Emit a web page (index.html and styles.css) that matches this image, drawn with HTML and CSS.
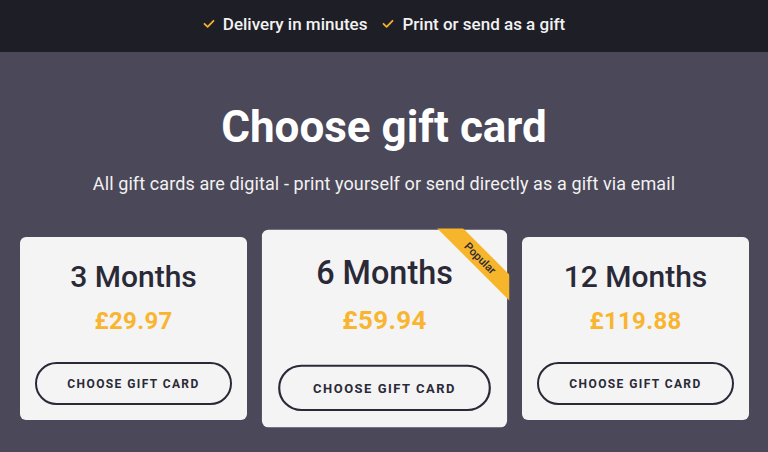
FILE: index.html
```html
<!DOCTYPE html>
<html lang="en">
<head>
<meta charset="utf-8">
<title>Choose gift card</title>
<link rel="stylesheet" href="styles.css">
</head>
<body>
<header class="topbar">
  <div class="perk"><svg class="check" viewBox="0 0 12 10" width="12" height="10"><path d="M1.5 4.8 L4.6 7.8 L10.5 1.8" fill="none" stroke="#f4b12e" stroke-width="1.8" stroke-linecap="round" stroke-linejoin="round"/></svg><span>Delivery in minutes</span></div>
  <div class="perk"><svg class="check" viewBox="0 0 12 10" width="12" height="10"><path d="M1.5 4.8 L4.6 7.8 L10.5 1.8" fill="none" stroke="#f4b12e" stroke-width="1.8" stroke-linecap="round" stroke-linejoin="round"/></svg><span>Print or send as a gift</span></div>
</header>
<main class="main">
  <h1 class="title">Choose gift card</h1>
  <p class="subtitle">All gift cards are digital - print yourself or send directly as a gift via email</p>
  <div class="cards">
    <div class="card">
      <div class="card-title">3 Months</div>
      <div class="price">£29.97</div>
      <button class="btn">CHOOSE GIFT CARD</button>
    </div>
    <div class="card card-popular">
      <div class="ribbon"><span class="band">Popular</span></div>
      <div class="card-title">6 Months</div>
      <div class="price">£59.94</div>
      <button class="btn">CHOOSE GIFT CARD</button>
    </div>
    <div class="card">
      <div class="card-title">12 Months</div>
      <div class="price">£119.88</div>
      <button class="btn">CHOOSE GIFT CARD</button>
    </div>
  </div>
</main>
</body>
</html>
```
FILE: styles.css
```css
* { box-sizing: border-box; }
html, body { margin: 0; padding: 0; }
body {
  font-family: Roboto, "Liberation Sans", sans-serif;
  background: #4b4859;
  width: 768px;
  height: 452px;
  overflow: hidden;
}
.topbar {
  height: 52px;
  background: #1e1e27;
  display: flex;
  justify-content: center;
  align-items: center;
  gap: 15px;
  color: #f2f2f2;
  font-size: 17px;
  font-weight: 500;
  padding-bottom: 4px;
}
.perk {
  display: flex;
  align-items: center;
  gap: 8px;
}
.check { display: block; }
.main {
  padding: 50px 20px 0 20px;
  text-align: center;
}
.title {
  margin: 0;
  color: #ffffff;
  font-size: 44px;
  line-height: 50px;
  font-weight: 700;
}
.subtitle {
  margin: 20px 0 0 0;
  color: #f2f2f2;
  font-size: 18px;
  line-height: 24px;
  font-weight: 400;
  letter-spacing: 0.1px;
}
.cards {
  margin-top: 41px;
  display: flex;
  gap: 24px;
}
.card {
  position: relative;
  width: 227px;
  background: #f4f4f4;
  border-radius: 6px;
  padding: 20px 15px 15px 15px;
  display: flex;
  flex-direction: column;
  align-items: center;
}
.card-popular {
  transform: scale(1.08);
}
.card-title {
  font-size: 30px;
  line-height: 40px;
  font-weight: 500;
  color: #2a2937;
}
.price {
  margin-top: 9px;
  font-size: 24px;
  line-height: 30px;
  font-weight: 700;
  color: #f9b530;
  letter-spacing: 0.3px;
}
.btn {
  margin-top: 26px;
  width: 197px;
  height: 43px;
  border: 2px solid #2a2937;
  border-radius: 22px;
  background: transparent;
  font-family: Roboto, "Liberation Sans", sans-serif;
  font-size: 12px;
  font-weight: 700;
  letter-spacing: 1.4px;
  color: #2a2937;
}
.ribbon {
  position: absolute;
  top: -1px;
  right: -2px;
  width: 67px;
  height: 67px;
  overflow: hidden;
}
.band {
  position: absolute;
  left: -15.5px;
  top: 19px;
  width: 110px;
  height: 17px;
  line-height: 17px;
  background: #f7b52b;
  color: #2a2937;
  font-size: 10.5px;
  font-weight: 500;
  text-align: center;
  transform: rotate(45deg);
}
```
